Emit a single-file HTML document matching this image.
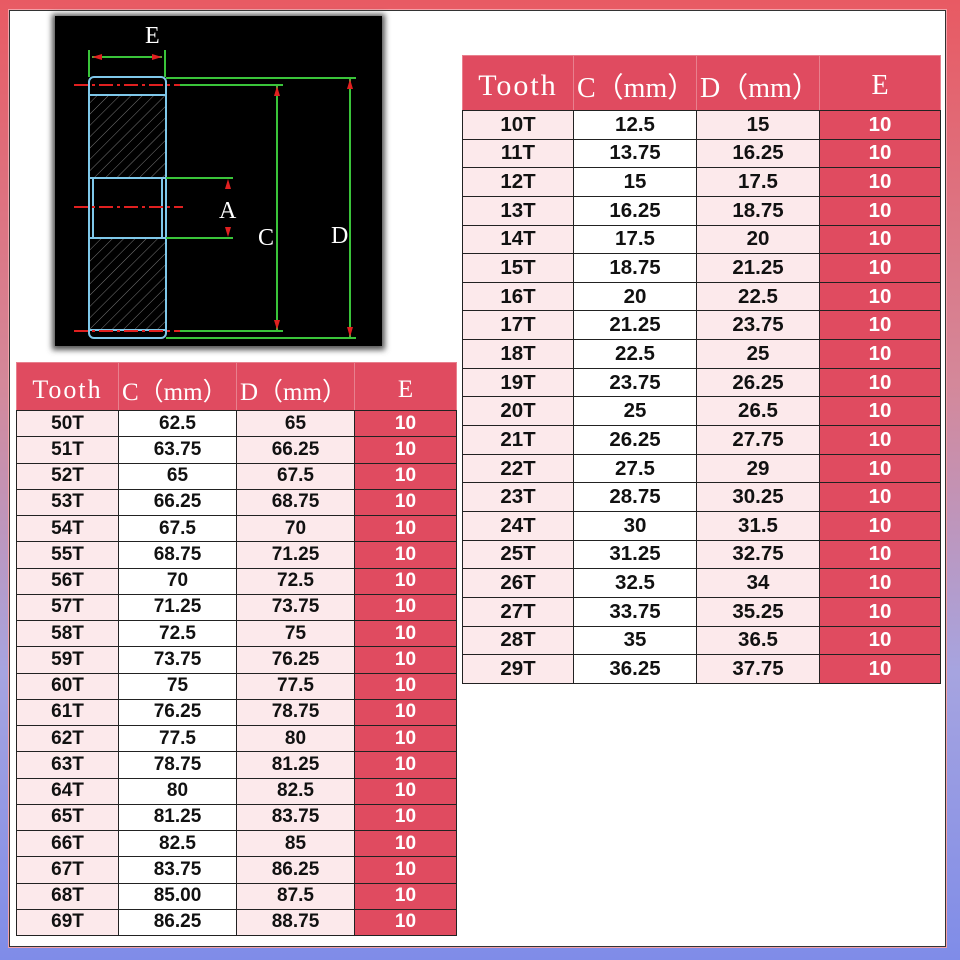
<!DOCTYPE html>
<html><head><meta charset="utf-8"><style>
*{margin:0;padding:0;box-sizing:border-box}
body{width:960px;height:960px;overflow:hidden;background:#fff;position:relative;font-family:"Liberation Sans",sans-serif}
.frame{position:absolute;left:0;top:0;width:960px;height:960px;background:linear-gradient(180deg,#e85a63 0%,#d4889a 40%,#a6a4e0 70%,#7f8ce8 100%)}
.inner{position:absolute;left:9px;top:10px;width:937px;height:937px;background:#fff;border:1px solid #333;box-shadow:0 0 0 1px #f3a0a8}
table{position:absolute;border-collapse:collapse;table-layout:fixed}
td,th{border:1.5px solid #222;text-align:center;font-weight:bold;color:#111;padding:0;overflow:hidden;white-space:nowrap}
th{background:#e04b60;color:#fff;font-family:"Liberation Serif",serif;font-weight:normal;border-color:#e8808e;border-bottom:1.5px solid #222;padding-top:6px}
td.a{background:#fce9eb}
td.b{background:#fff}
td.e{background:#e04b60;color:#fff}
#L{left:16px;top:362px;width:440px;font-size:19px}
#L tr.h{height:48px}
#L tr{height:26.25px}
#R{left:462px;top:55px;width:478px;font-size:20.5px}
#R tr.h{height:55px}
#R tr{height:28.65px}
th.t{letter-spacing:2px;text-align:center}
th.c{text-align:left;padding-left:3px}
</style></head><body>
<div class="frame"></div>
<div class="inner"></div>
<svg style="position:absolute;left:0;top:0" width="960" height="960">
<defs><filter id="bl"><feGaussianBlur stdDeviation="3"/></filter>
<pattern id="hat" width="8" height="8" patternUnits="userSpaceOnUse" patternTransform="rotate(45)"><line x1="0" y1="0" x2="0" y2="8" stroke="#777" stroke-width="1"/></pattern></defs>
<rect x="52" y="14" width="333" height="336" fill="#555" filter="url(#bl)"/>
<rect x="55" y="16" width="327" height="330" fill="#000"/>
<rect x="89" y="95" width="76" height="83" fill="url(#hat)"/>
<rect x="89" y="238" width="76" height="93" fill="url(#hat)"/>
<g stroke="#7fc8ea" stroke-width="2" fill="none">
<rect x="89" y="77" width="77" height="261" rx="5"/>
<line x1="89" y1="95" x2="166" y2="95"/><line x1="89" y1="330" x2="166" y2="330"/>
<rect x="93" y="178" width="69" height="60"/>
<line x1="89" y1="178" x2="166" y2="178"/><line x1="89" y1="238" x2="166" y2="238"/>
</g>
<g stroke="#3ac43a" stroke-width="2">
<line x1="89" y1="50" x2="89" y2="77"/><line x1="165" y1="50" x2="165" y2="77"/>
<line x1="92" y1="57" x2="162" y2="57"/>
<line x1="166" y1="78" x2="356" y2="78"/><line x1="180" y1="85" x2="283" y2="85"/>
<line x1="180" y1="331" x2="283" y2="331"/><line x1="166" y1="338" x2="356" y2="338"/>
<line x1="277" y1="85" x2="277" y2="331"/><line x1="350" y1="78" x2="350" y2="338"/>
<line x1="166" y1="178" x2="233" y2="178"/><line x1="166" y1="238" x2="233" y2="238"/>
</g>
<g stroke="#e02020" stroke-width="2" stroke-dasharray="14,4,3,4">
<line x1="74" y1="85" x2="180" y2="85"/><line x1="74" y1="207" x2="183" y2="207"/><line x1="74" y1="331" x2="180" y2="331"/>
</g>
<g fill="#e02020">
<path d="M92 57l10-3v6zM162 57l-10-3v6zM277 86l-3 10h6zM277 330l-3-10h6zM350 79l-3 10h6zM350 337l-3-10h6zM228 179l-3 10h6zM228 237l-3-10h6z"/>
</g>
<g fill="#fff" font-family="Liberation Serif,serif" font-size="24">
<text x="145" y="43">E</text><text x="219" y="218">A</text><text x="258" y="245">C</text><text x="331" y="243">D</text>
</g>
</svg>
<table id="L"><colgroup><col style="width:102px"><col style="width:118px"><col style="width:118px"><col style="width:102px"></colgroup>
<tr class="h"><th class="t" style="font-size:26px">Tooth</th><th class="c" style="font-size:25px">C（mm）</th><th class="c" style="font-size:25px">D（mm）</th><th style="font-size:25px">E</th></tr>
<tr><td class="a">50T</td><td class="b">62.5</td><td class="a">65</td><td class="e">10</td></tr>
<tr><td class="a">51T</td><td class="b">63.75</td><td class="a">66.25</td><td class="e">10</td></tr>
<tr><td class="a">52T</td><td class="b">65</td><td class="a">67.5</td><td class="e">10</td></tr>
<tr><td class="a">53T</td><td class="b">66.25</td><td class="a">68.75</td><td class="e">10</td></tr>
<tr><td class="a">54T</td><td class="b">67.5</td><td class="a">70</td><td class="e">10</td></tr>
<tr><td class="a">55T</td><td class="b">68.75</td><td class="a">71.25</td><td class="e">10</td></tr>
<tr><td class="a">56T</td><td class="b">70</td><td class="a">72.5</td><td class="e">10</td></tr>
<tr><td class="a">57T</td><td class="b">71.25</td><td class="a">73.75</td><td class="e">10</td></tr>
<tr><td class="a">58T</td><td class="b">72.5</td><td class="a">75</td><td class="e">10</td></tr>
<tr><td class="a">59T</td><td class="b">73.75</td><td class="a">76.25</td><td class="e">10</td></tr>
<tr><td class="a">60T</td><td class="b">75</td><td class="a">77.5</td><td class="e">10</td></tr>
<tr><td class="a">61T</td><td class="b">76.25</td><td class="a">78.75</td><td class="e">10</td></tr>
<tr><td class="a">62T</td><td class="b">77.5</td><td class="a">80</td><td class="e">10</td></tr>
<tr><td class="a">63T</td><td class="b">78.75</td><td class="a">81.25</td><td class="e">10</td></tr>
<tr><td class="a">64T</td><td class="b">80</td><td class="a">82.5</td><td class="e">10</td></tr>
<tr><td class="a">65T</td><td class="b">81.25</td><td class="a">83.75</td><td class="e">10</td></tr>
<tr><td class="a">66T</td><td class="b">82.5</td><td class="a">85</td><td class="e">10</td></tr>
<tr><td class="a">67T</td><td class="b">83.75</td><td class="a">86.25</td><td class="e">10</td></tr>
<tr><td class="a">68T</td><td class="b">85.00</td><td class="a">87.5</td><td class="e">10</td></tr>
<tr><td class="a">69T</td><td class="b">86.25</td><td class="a">88.75</td><td class="e">10</td></tr>
</table>
<table id="R"><colgroup><col style="width:111px"><col style="width:123px"><col style="width:123px"><col style="width:121px"></colgroup>
<tr class="h"><th class="t" style="font-size:30px">Tooth</th><th class="c" style="font-size:28px">C（mm）</th><th class="c" style="font-size:28px">D（mm）</th><th style="font-size:28px">E</th></tr>
<tr><td class="a">10T</td><td class="b">12.5</td><td class="a">15</td><td class="e">10</td></tr>
<tr><td class="a">11T</td><td class="b">13.75</td><td class="a">16.25</td><td class="e">10</td></tr>
<tr><td class="a">12T</td><td class="b">15</td><td class="a">17.5</td><td class="e">10</td></tr>
<tr><td class="a">13T</td><td class="b">16.25</td><td class="a">18.75</td><td class="e">10</td></tr>
<tr><td class="a">14T</td><td class="b">17.5</td><td class="a">20</td><td class="e">10</td></tr>
<tr><td class="a">15T</td><td class="b">18.75</td><td class="a">21.25</td><td class="e">10</td></tr>
<tr><td class="a">16T</td><td class="b">20</td><td class="a">22.5</td><td class="e">10</td></tr>
<tr><td class="a">17T</td><td class="b">21.25</td><td class="a">23.75</td><td class="e">10</td></tr>
<tr><td class="a">18T</td><td class="b">22.5</td><td class="a">25</td><td class="e">10</td></tr>
<tr><td class="a">19T</td><td class="b">23.75</td><td class="a">26.25</td><td class="e">10</td></tr>
<tr><td class="a">20T</td><td class="b">25</td><td class="a">26.5</td><td class="e">10</td></tr>
<tr><td class="a">21T</td><td class="b">26.25</td><td class="a">27.75</td><td class="e">10</td></tr>
<tr><td class="a">22T</td><td class="b">27.5</td><td class="a">29</td><td class="e">10</td></tr>
<tr><td class="a">23T</td><td class="b">28.75</td><td class="a">30.25</td><td class="e">10</td></tr>
<tr><td class="a">24T</td><td class="b">30</td><td class="a">31.5</td><td class="e">10</td></tr>
<tr><td class="a">25T</td><td class="b">31.25</td><td class="a">32.75</td><td class="e">10</td></tr>
<tr><td class="a">26T</td><td class="b">32.5</td><td class="a">34</td><td class="e">10</td></tr>
<tr><td class="a">27T</td><td class="b">33.75</td><td class="a">35.25</td><td class="e">10</td></tr>
<tr><td class="a">28T</td><td class="b">35</td><td class="a">36.5</td><td class="e">10</td></tr>
<tr><td class="a">29T</td><td class="b">36.25</td><td class="a">37.75</td><td class="e">10</td></tr>
</table>
</body></html>
